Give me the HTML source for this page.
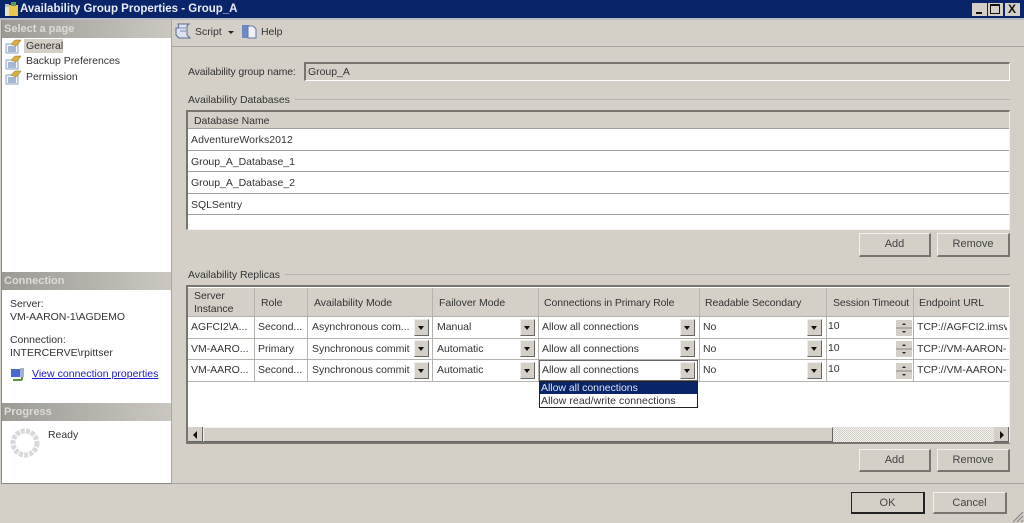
<!DOCTYPE html>
<html><head><meta charset="utf-8">
<style>
html,body{margin:0;padding:0;background:#d4d0c8}
#r{position:relative;width:1024px;height:523px;overflow:hidden;background:#d4d0c8;font-family:"Liberation Sans",sans-serif;font-size:10.5px;letter-spacing:-.03px;color:#333;filter:blur(.35px)}
#r div,#r span.t,#r svg{position:absolute}
.t{white-space:nowrap;line-height:13px;position:absolute;margin-top:1px}
.hd{background:linear-gradient(90deg,#9c9a95,#cbc8c1);left:2px;width:169px;height:18px;color:#dedcd6;font-weight:bold;font-size:11px;letter-spacing:0;line-height:19px;padding-left:2px;box-sizing:border-box}
.btn{background:#d4d0c8;border-top:1px solid #f4f2ee;border-left:1px solid #f4f2ee;border-right:2px solid #77756f;border-bottom:2px solid #77756f;box-sizing:border-box;text-align:center;line-height:21px;font-size:11px;letter-spacing:0;color:#444}
.dd{width:15px;height:17px;background:#d4d0c8;border-top:1px solid #eee;border-left:1px solid #eee;border-right:1px solid #666;border-bottom:1px solid #666;box-sizing:border-box}
.dd:after{content:"";position:absolute;left:3px;top:6px;border-left:3.5px solid transparent;border-right:3.5px solid transparent;border-top:4px solid #111}
.hl{background:#b5b3ad;height:1px}
.vl{background:#b5b3ad;width:1px}
.hs{background:#d4d0c8}
</style></head><body>
<div id="r">
<div style="left:0;top:0;width:1024px;height:18px;background:#0a246a"></div>
<div style="left:0;top:18px;width:1024px;height:2px;background:#b9bcc4"></div>
<svg style="left:4px;top:1px" width="15" height="16" viewBox="0 0 15 16"><rect x="1" y="5" width="4" height="10" fill="#e8e4c8"/><rect x="5" y="4" width="9" height="11" fill="#e8c850"/><rect x="7" y="1" width="5" height="4" fill="#5a9a60"/><rect x="1" y="3" width="4" height="3" fill="#bbb"/></svg>
<span class="t" style="left:20px;top:3px;margin:0;font-weight:bold;color:#e8ecf4;font-size:11.5px;letter-spacing:0">Availability Group Properties - Group_A</span>
<div style="left:972px;top:3px;width:15px;height:13px;background:#d4d0c8"><div style="left:4px;top:9px;width:6px;height:2px;background:#111"></div></div>
<div style="left:988px;top:3px;width:15px;height:13px;background:#d4d0c8"><div style="left:2px;top:1px;width:8px;height:7px;border:1px solid #111;border-top-width:2px"></div></div>
<div style="left:1005px;top:3px;width:15px;height:13px;background:#d4d0c8"><span class="t" style="left:3px;top:0;margin:0;font-weight:bold;font-size:12px;color:#111">X</span></div>

<!-- left panel -->
<div style="left:1px;top:20px;width:171px;height:464px;background:#fff;border-left:1px solid #8a8884;border-right:1px solid #a8a6a0;border-bottom:1px solid #8a8884;box-sizing:border-box"></div>
<div class="hd" style="top:20px">Select a page</div>
<div style="left:24px;top:39px;width:39px;height:14px;background:#d4d0c8"></div>
<svg style="left:5px;top:38px" width="17" height="48" viewBox="0 0 17 48">
<g><rect x="1" y="6" width="12" height="9" fill="#f4f6fa" stroke="#8aa0c0"/><path d="M3 9h8M3 11h8M3 13h8" stroke="#5a78a8"/><path d="M6 6l4-4h6l-2 3-3 3z" fill="#d8b040" stroke="#8a7020" stroke-width=".5"/></g>
<g transform="translate(0,16)"><rect x="1" y="6" width="12" height="9" fill="#f4f6fa" stroke="#8aa0c0"/><path d="M3 9h8M3 11h8M3 13h8" stroke="#5a78a8"/><path d="M6 6l4-4h6l-2 3-3 3z" fill="#d8b040" stroke="#8a7020" stroke-width=".5"/></g>
<g transform="translate(0,31)"><rect x="1" y="6" width="12" height="9" fill="#f4f6fa" stroke="#8aa0c0"/><path d="M3 9h8M3 11h8M3 13h8" stroke="#5a78a8"/><path d="M6 6l4-4h6l-2 3-3 3z" fill="#d8b040" stroke="#8a7020" stroke-width=".5"/></g>
</svg>
<span class="t" style="left:26px;top:39px">General</span>
<span class="t" style="left:26px;top:54px">Backup Preferences</span>
<span class="t" style="left:26px;top:70px">Permission</span>
<div class="hd" style="top:272px">Connection</div>
<span class="t" style="left:10px;top:297px">Server:</span>
<span class="t" style="left:10px;top:310px">VM-AARON-1\AGDEMO</span>
<span class="t" style="left:10px;top:333px">Connection:</span>
<span class="t" style="left:10px;top:346px;letter-spacing:.02px">INTERCERVE\rpittser</span>
<svg style="left:10px;top:367px" width="16" height="16" viewBox="0 0 16 16"><rect x="1" y="2" width="9" height="8" fill="#4a6ad0"/><rect x="10" y="1" width="4" height="9" fill="#a0b0d8"/><path d="M3 13h9M12 10v3" stroke="#5a9a40" stroke-width="2" fill="none"/></svg>
<span class="t" style="left:32px;top:367px;color:#1a1ac8;text-decoration:underline;letter-spacing:.02px">View connection properties</span>
<div class="hd" style="top:403px">Progress</div>
<svg style="left:10px;top:428px" width="30" height="30" viewBox="0 0 30 30"><circle cx="15" cy="15" r="12" fill="none" stroke="#d8d8d8" stroke-width="5" stroke-dasharray="4 1.2"/></svg>
<span class="t" style="left:48px;top:428px">Ready</span>

<!-- toolbar -->
<div style="left:172px;top:46px;width:852px;height:1px;background:#a8a6a0"></div>
<svg style="left:175px;top:23px" width="17" height="17" viewBox="0 0 17 17"><path d="M3 1h11l-2 2v9l3 3H4l-3-3V5h3z" fill="#dde2ee" stroke="#5a6a90"/><path d="M5 5h6M5 8h6" stroke="#7a88a8"/></svg>
<span class="t" style="left:195px;top:25px">Script</span>
<div style="left:228px;top:31px;width:0;height:0;border-left:3px solid transparent;border-right:3px solid transparent;border-top:3px solid #222"></div>
<svg style="left:241px;top:23px" width="17" height="17" viewBox="0 0 17 17"><rect x="1" y="2" width="7" height="13" fill="#7088c0"/><path d="M7 3h5l3 3v9H7z" fill="#eef0f6" stroke="#6078a8"/></svg>
<span class="t" style="left:261px;top:25px">Help</span>

<!-- group name -->
<span class="t" style="left:188px;top:65px;letter-spacing:-.15px">Availability group name:</span>
<div style="left:304px;top:62px;width:706px;height:19px;background:#d4d0c8;border-top:2px solid #77756f;border-left:2px solid #77756f;border-right:1px solid #fff;border-bottom:1px solid #fff;box-sizing:border-box"></div>
<span class="t" style="left:308px;top:65px">Group_A</span>

<!-- DB section -->
<span class="t" style="left:188px;top:93px">Availability Databases</span>
<div class="hl" style="left:295px;top:99px;width:715px"></div>
<div style="left:186px;top:110px;width:824px;height:120px;background:#fff;border-top:2px solid #77756f;border-left:2px solid #77756f;border-right:1px solid #f4f2ee;border-bottom:1px solid #f4f2ee;box-sizing:border-box"></div>
<div class="hs" style="left:188px;top:112px;width:821px;height:16px"></div>
<span class="t" style="left:194px;top:114px">Database Name</span>
<div class="hl" style="left:188px;top:128px;width:821px;background:#a0a0a0"></div>
<div class="hl" style="left:188px;top:150px;width:821px;background:#a0a0a0"></div>
<div class="hl" style="left:188px;top:171px;width:821px;background:#a0a0a0"></div>
<div class="hl" style="left:188px;top:193px;width:821px;background:#a0a0a0"></div>
<div class="hl" style="left:188px;top:214px;width:821px;background:#a0a0a0"></div>
<span class="t" style="left:191px;top:133px;letter-spacing:.06px">AdventureWorks2012</span>
<span class="t" style="left:191px;top:155px">Group_A_Database_1</span>
<span class="t" style="left:191px;top:176px">Group_A_Database_2</span>
<span class="t" style="left:191px;top:198px">SQLSentry</span>
<div class="btn" style="left:859px;top:233px;width:72px;height:24px">Add</div>
<div class="btn" style="left:937px;top:233px;width:73px;height:24px">Remove</div>

<!-- replicas -->
<span class="t" style="left:188px;top:268px">Availability Replicas</span>
<div class="hl" style="left:285px;top:274px;width:725px"></div>
<div style="left:186px;top:285px;width:824px;height:159px;background:#fff;border-top:2px solid #77756f;border-left:2px solid #77756f;border-right:1px solid #f4f2ee;border-bottom:2px solid #77756f;box-sizing:border-box"></div>
<div class="hs" style="left:188px;top:288px;width:821px;height:28px"></div>
<div class="hl" style="left:188px;top:316px;width:821px"></div>
<div class="hl" style="left:188px;top:338px;width:821px"></div>
<div class="hl" style="left:188px;top:359px;width:821px"></div>
<div class="hl" style="left:188px;top:381px;width:821px"></div>
<div class="vl" style="left:254px;top:288px;height:94px"></div>
<div class="vl" style="left:307px;top:288px;height:94px"></div>
<div class="vl" style="left:432px;top:288px;height:94px"></div>
<div class="vl" style="left:538px;top:288px;height:94px"></div>
<div class="vl" style="left:699px;top:288px;height:94px"></div>
<div class="vl" style="left:826px;top:288px;height:94px"></div>
<div class="vl" style="left:913px;top:288px;height:94px"></div>

<span class="t" style="left:194px;top:289px">Server</span>
<span class="t" style="left:194px;top:302px">Instance</span>
<span class="t" style="left:261px;top:296px">Role</span>
<span class="t" style="left:314px;top:296px">Availability Mode</span>
<span class="t" style="left:439px;top:296px">Failover Mode</span>
<span class="t" style="left:544px;top:296px;letter-spacing:-.1px">Connections in Primary Role</span>
<span class="t" style="left:705px;top:296px;letter-spacing:-.1px">Readable Secondary</span>
<span class="t" style="left:833px;top:296px;letter-spacing:-.1px">Session Timeout</span>
<span class="t" style="left:919px;top:296px">Endpoint URL</span>

<span class="t" style="left:191px;top:320px">AGFCI2\A...</span>
<span class="t" style="left:258px;top:320px">Second...</span>
<span class="t" style="left:312px;top:320px">Asynchronous com...</span>
<span class="t" style="left:437px;top:320px">Manual</span>
<span class="t" style="left:542px;top:320px">Allow all connections</span>
<span class="t" style="left:703px;top:320px">No</span>
<span class="t" style="left:828px;top:319px">10</span>
<span class="t" style="left:917px;top:320px;width:90px;overflow:hidden">TCP://AGFCI2.imsvc</span>

<span class="t" style="left:191px;top:342px">VM-AARO...</span>
<span class="t" style="left:258px;top:342px">Primary</span>
<span class="t" style="left:312px;top:342px">Synchronous commit</span>
<span class="t" style="left:437px;top:342px">Automatic</span>
<span class="t" style="left:542px;top:342px">Allow all connections</span>
<span class="t" style="left:703px;top:342px">No</span>
<span class="t" style="left:828px;top:341px">10</span>
<span class="t" style="left:917px;top:342px;width:90px;overflow:hidden">TCP://VM-AARON-1</span>

<span class="t" style="left:191px;top:363px">VM-AARO...</span>
<span class="t" style="left:258px;top:363px">Second...</span>
<span class="t" style="left:312px;top:363px">Synchronous commit</span>
<span class="t" style="left:437px;top:363px">Automatic</span>
<span class="t" style="left:542px;top:363px">Allow all connections</span>
<span class="t" style="left:703px;top:363px">No</span>
<span class="t" style="left:828px;top:362px">10</span>
<span class="t" style="left:917px;top:363px;width:90px;overflow:hidden">TCP://VM-AARON-1</span>

<div class="dd" style="left:414px;top:319px"></div><div class="dd" style="left:414px;top:340px"></div><div class="dd" style="left:414px;top:362px"></div>
<div class="dd" style="left:520px;top:319px"></div><div class="dd" style="left:520px;top:340px"></div><div class="dd" style="left:520px;top:362px"></div>
<div class="dd" style="left:680px;top:319px"></div><div class="dd" style="left:680px;top:340px"></div><div class="dd" style="left:680px;top:362px"></div>
<div class="dd" style="left:807px;top:319px"></div><div class="dd" style="left:807px;top:340px"></div><div class="dd" style="left:807px;top:362px"></div>
<svg style="left:896px;top:320px" width="16" height="60" viewBox="0 0 16 60">
<g><rect width="16" height="16" fill="#d4d0c8"/><path d="M0 8h16" stroke="#888"/><path d="M6 5l2-2 2 2zM6 11l2 2 2-2z" fill="#222"/></g>
<g transform="translate(0,21)"><rect width="16" height="16" fill="#d4d0c8"/><path d="M0 8h16" stroke="#888"/><path d="M6 5l2-2 2 2zM6 11l2 2 2-2z" fill="#222"/></g>
<g transform="translate(0,43)"><rect width="16" height="16" fill="#d4d0c8"/><path d="M0 8h16" stroke="#888"/><path d="M6 5l2-2 2 2zM6 11l2 2 2-2z" fill="#222"/></g>
</svg>
<div style="left:539px;top:360px;width:159px;height:21px;border:1px solid #666;box-sizing:border-box"></div>
<div style="left:539px;top:381px;width:159px;height:27px;background:#fff;border:1px solid #222;box-sizing:border-box"></div>
<div style="left:540px;top:382px;width:157px;height:12px;background:#0a246a"></div>
<span class="t" style="left:541px;top:381px;color:#dfe4f0">Allow all connections</span>
<span class="t" style="left:541px;top:394px;letter-spacing:.06px">Allow read/write connections</span>

<!-- scrollbar -->
<div style="left:188px;top:427px;width:821px;height:15px;background:repeating-conic-gradient(#d4d0c8 0 25%,#f4f2ee 0 50%) 0 0/2px 2px"></div>
<div style="left:188px;top:427px;width:15px;height:15px;background:#d4d0c8;border-right:1px solid #666;border-bottom:1px solid #666;box-sizing:border-box"></div>
<div style="left:193px;top:431px;width:0;height:0;border-top:4px solid transparent;border-bottom:4px solid transparent;border-right:4px solid #111"></div>
<div style="left:203px;top:427px;width:630px;height:15px;background:#d4d0c8;border-right:1px solid #666;border-bottom:1px solid #666;border-top:1px solid #f4f2ee;border-left:1px solid #f4f2ee;box-sizing:border-box"></div>
<div style="left:994px;top:427px;width:15px;height:15px;background:#d4d0c8;border-right:1px solid #666;border-bottom:1px solid #666;box-sizing:border-box"></div>
<div style="left:1000px;top:431px;width:0;height:0;border-top:4px solid transparent;border-bottom:4px solid transparent;border-left:4px solid #111"></div>

<div class="btn" style="left:859px;top:449px;width:72px;height:23px">Add</div>
<div class="btn" style="left:937px;top:449px;width:73px;height:23px">Remove</div>

<!-- footer -->
<div style="left:172px;top:483px;width:852px;height:1px;background:#a8a6a0"></div>
<div class="btn" style="left:851px;top:492px;width:74px;height:22px;border:1px solid #222;border-right-width:2px;border-bottom-width:2px">OK</div>
<div class="btn" style="left:933px;top:492px;width:74px;height:22px">Cancel</div>
<svg style="left:1010px;top:509px" width="14" height="14" viewBox="0 0 14 14"><path d="M3 13L13 3M7 13l6-6M11 13l2-2" stroke="#888" stroke-width="1.2"/></svg>
</div>
</body></html>
